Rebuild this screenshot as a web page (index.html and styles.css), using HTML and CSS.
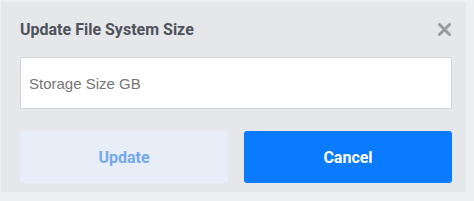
FILE: index.html
```html
<!DOCTYPE html>
<html lang="en">
<head>
<meta charset="UTF-8">
<meta name="viewport" content="width=device-width, initial-scale=1.0">
<title>Update File System Size</title>
<link rel="stylesheet" href="styles.css">
</head>
<body>

<div class="modal">
    <div class="modal-header">
        <h2>Update File System Size</h2>
        <span class="close">
            <svg width="13" height="13" viewBox="0 0 13 13">
                <path d="M1.5 1.5 L11.5 11.5 M11.5 1.5 L1.5 11.5" stroke="currentColor" stroke-width="3" stroke-linecap="round"/>
            </svg>
        </span>
    </div>

    <input class="size-input" type="text" placeholder="Storage Size GB" autofocus>

    <div class="modal-actions">
        <button class="btn btn-update">Update</button>
        <button class="btn btn-cancel">Cancel</button>
    </div>
</div>

</body>
</html>
```

FILE: styles.css
```css
body {
    margin: 0;
    padding: 0;
    background-color: #eeeff1;
    font-family: Roboto, "Liberation Sans", sans-serif;
}
.modal {
    background-color: #e6e7eb;
    width: 465px;
    height: 190px;
    margin-top: 2px;
    margin-left: 1px;
    padding: 0 14px 0 19px;
    box-sizing: border-box;
}
.modal-header {
    display: flex;
    justify-content: space-between;
    align-items: center;
    height: 55px;
}
.modal-header h2 {
    margin: 0;
    font-size: 16px;
    font-weight: bold;
    color: #4f525a;
}
.close {
    display: flex;
    color: #9a9b9f;
    cursor: pointer;
    margin-right: 1px;
}
.size-input {
    display: block;
    width: 100%;
    height: 52px;
    box-sizing: border-box;
    border: 1px solid #d3d4d8;
    border-radius: 2px;
    background-color: #fff;
    padding: 0 8px;
    font-family: "Liberation Sans", Arial, sans-serif;
    font-size: 15px;
    outline: none;
}
.size-input::placeholder {
    color: #767676;
}
.modal-actions {
    display: flex;
    gap: 16px;
    margin-top: 22px;
}
.btn {
    flex: 1;
    height: 52px;
    border: none;
    border-radius: 3px;
    font-family: Roboto, "Liberation Sans", sans-serif;
    font-size: 16px;
    font-weight: bold;
    cursor: pointer;
}
.btn-update {
    background-color: #e8eef7;
    color: #73a9ee;
}
.btn-cancel {
    background-color: #0a7aff;
    color: #fff;
}
```
